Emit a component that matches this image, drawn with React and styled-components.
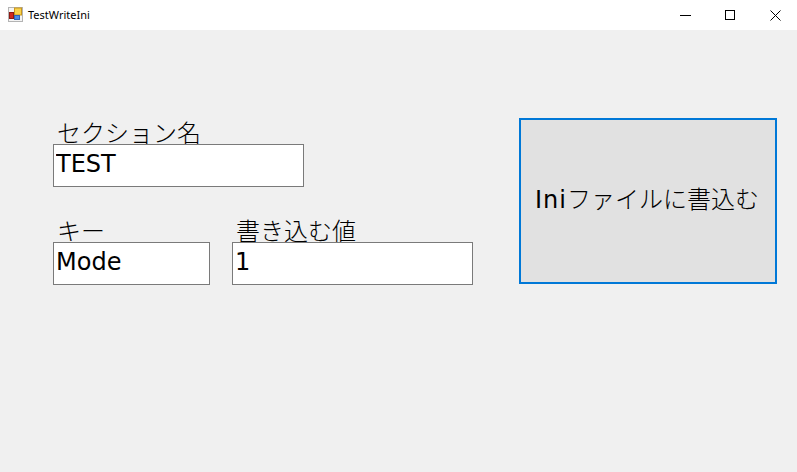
import React from 'react';
import styled, { createGlobalStyle } from 'styled-components';

const GlobalStyle = createGlobalStyle`
  html, body {
    margin: 0;
    padding: 0;
    background: #f0f0f0;
  }
  * {
    box-sizing: border-box;
  }
`;

const FONT = '"DejaVu Sans", "Noto Sans CJK JP", sans-serif';

const Window = styled.div`
  width: 797px;
  height: 472px;
  overflow: hidden;
  display: flex;
  flex-direction: column;
  background: #f0f0f0;
  font-family: ${FONT};
  color: #000;
`;

const TitleBar = styled.header`
  height: 30px;
  flex: none;
  background: #fff;
  display: flex;
  align-items: center;
  padding-left: 8px;
`;

const AppTitle = styled.span`
  margin-left: 4px;
  font-family: "Noto Sans", sans-serif;
  font-size: 11px;
  line-height: 30px;
  flex: 1;
`;

const Controls = styled.div`
  display: flex;
  height: 100%;
`;

const ControlButton = styled.button`
  width: 45px;
  height: 30px;
  padding: 0 0 0 2px;
  border: 0;
  background: transparent;
  display: flex;
  align-items: center;
  justify-content: center;
`;

const Form = styled.main`
  flex: 1;
  display: flex;
  justify-content: space-between;
  align-items: flex-start;
  padding: 88px 20px 0 53px;
`;

const Fields = styled.div`
  display: flex;
  flex-direction: column;
  gap: 30px;
  padding-top: 1px;
`;

const Row = styled.div`
  display: flex;
  gap: 22px;
`;

const Field = styled.div`
  display: flex;
  flex-direction: column;
  width: ${props => props.width}px;
`;

const Label = styled.label`
  display: block;
  height: 25px;
  padding-left: 4px;
  font-size: 24px;
  font-weight: 300;
  line-height: 30px;
  white-space: nowrap;
`;

const Input = styled.input`
  position: relative;
  width: 100%;
  height: 43px;
  padding: 0 3px 4px 2px;
  border: 1px solid #7a7a7a;
  border-radius: 0;
  outline: none;
  background: #fff;
  color: #000;
  font-family: ${FONT};
  font-size: 24px;
`;

const SubmitButton = styled.button`
  width: 258px;
  height: 166px;
  padding: 0 2px 8px 0;
  border: 2px solid #0078d7;
  border-radius: 0;
  background: #e1e1e1;
  color: #000;
  font-family: ${FONT};
  font-size: 24px;
  font-weight: 300;
  white-space: nowrap;
`;

const Latin = styled.span`
  font-weight: 400;
  letter-spacing: 1px;
`;

const AppIcon = () => (
  <svg width="16" height="16" viewBox="0 0 16 16">
    <rect x="0.5" y="0.5" width="14" height="14" fill="#f4f4f4" stroke="#b4b4b4" />
    <rect x="6.5" y="1" width="7" height="7" fill="#f9d24a" stroke="#c8961e" />
    <rect x="1.5" y="5.5" width="4" height="6" fill="#d0281e" stroke="#8c1a14" />
    <rect x="6.5" y="8.5" width="5" height="4" fill="#4a8be8" stroke="#2f65b4" />
  </svg>
);

const MinimizeIcon = () => (
  <svg width="11" height="11" viewBox="0 0 11 11">
    <path d="M0 5.5H11" stroke="#000" strokeWidth="1" />
  </svg>
);

const MaximizeIcon = () => (
  <svg width="11" height="11" viewBox="0 0 11 11">
    <rect x="0.5" y="0.5" width="9" height="9" fill="none" stroke="#000" strokeWidth="1" />
  </svg>
);

const CloseIcon = () => (
  <svg width="11" height="11" viewBox="0 0 11 11">
    <path d="M0.5 0.5L10.5 10.5M10.5 0.5L0.5 10.5" stroke="#000" strokeWidth="1" />
  </svg>
);

const App = () => (
  <Window>
    <GlobalStyle />
    <TitleBar>
      <AppIcon />
      <AppTitle>TestWriteIni</AppTitle>
      <Controls>
        <ControlButton type="button"><MinimizeIcon /></ControlButton>
        <ControlButton type="button"><MaximizeIcon /></ControlButton>
        <ControlButton type="button"><CloseIcon /></ControlButton>
      </Controls>
    </TitleBar>
    <Form>
      <Fields>
        <Field width={251}>
          <Label>セクション名</Label>
          <Input defaultValue="TEST" />
        </Field>
        <Row>
          <Field width={157}>
            <Label>キー</Label>
            <Input defaultValue="Mode" />
          </Field>
          <Field width={241}>
            <Label>書き込む値</Label>
            <Input defaultValue="1" />
          </Field>
        </Row>
      </Fields>
      <SubmitButton type="button"><Latin>Ini</Latin>ファイルに書込む</SubmitButton>
    </Form>
  </Window>
);

export default App;
